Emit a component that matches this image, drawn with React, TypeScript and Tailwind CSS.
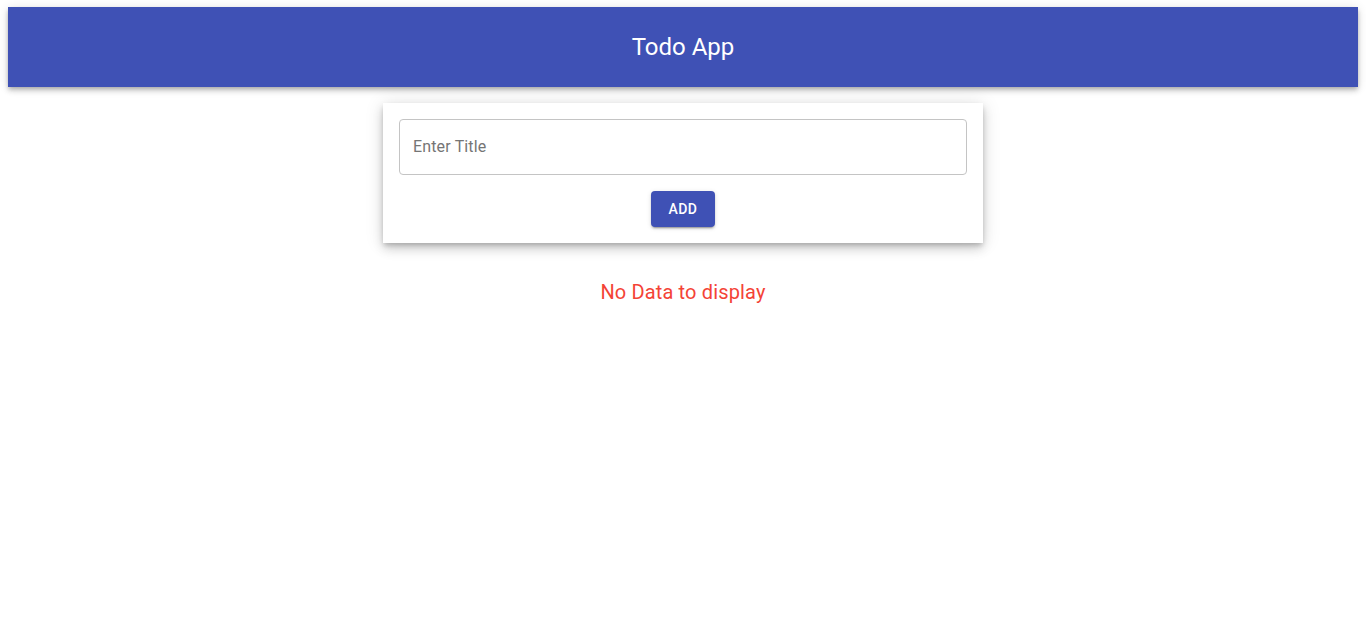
import React from "react";

export default function App() {
  return (
    <div
      className="min-h-[636px] bg-white px-2 pt-[7px]"
      style={{ fontFamily: "Roboto, 'Liberation Sans', sans-serif" }}
    >
      <header className="flex h-20 items-center justify-center bg-[#3f51b5] shadow-[0px_2px_4px_-1px_rgba(0,0,0,0.2),0px_4px_5px_0px_rgba(0,0,0,0.14),0px_1px_10px_0px_rgba(0,0,0,0.12)]">
        <h1 className="text-[24px] font-normal leading-8 text-white">Todo App</h1>
      </header>
      <div className="mt-4 flex flex-col items-center">
        <div className="w-[600px] bg-white p-4 shadow-[0px_3px_5px_-1px_rgba(0,0,0,0.2),0px_6px_10px_0px_rgba(0,0,0,0.14),0px_1px_18px_0px_rgba(0,0,0,0.12)]">
          <input
            type="text"
            placeholder="Enter Title"
            className="block h-14 w-full rounded border border-[#c4c4c4] px-[13px] pb-[2px] text-[16px] tracking-[0.15px] text-[#222] outline-none placeholder:text-[#757575]"
          />
          <div className="mt-4 flex justify-center">
            <button className="h-9 w-16 rounded bg-[#3f51b5] text-[14px] font-medium uppercase tracking-[0.4px] text-white shadow-[0px_3px_1px_-2px_rgba(0,0,0,0.2),0px_2px_2px_0px_rgba(0,0,0,0.14),0px_1px_5px_0px_rgba(0,0,0,0.12)]">
              Add
            </button>
          </div>
        </div>
        <p className="mt-[33px] text-[20px] leading-8 tracking-[0.15px] text-[#f44336]">No Data to display</p>
      </div>
    </div>
  );
}
